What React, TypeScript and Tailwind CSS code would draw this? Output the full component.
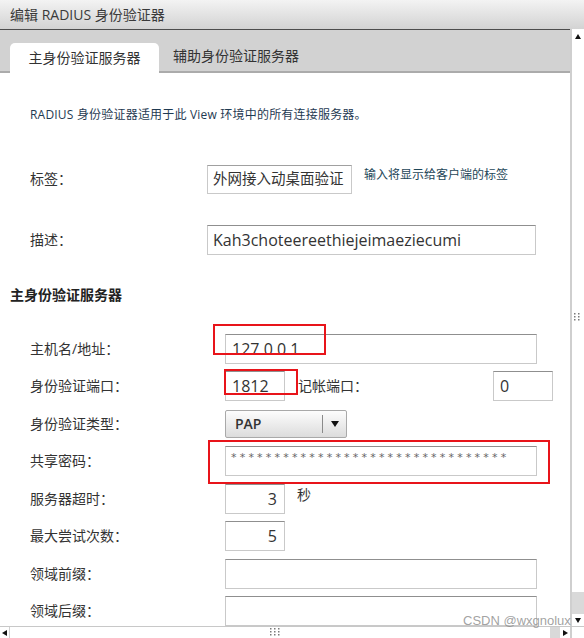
import React from "react";

function Box({
  className = "",
  children,
}: {
  className?: string;
  children?: React.ReactNode;
}) {
  return (
    <div
      className={
        "bg-white border border-[#c9c9c9] border-t-[#8f8f8f] flex items-center text-[#333] " +
        className
      }
    >
      {children}
    </div>
  );
}

function Grip({ cols, rows }: { cols: number; rows: number }) {
  const dots: React.ReactNode[] = [];
  for (let c = 0; c < cols; c++) {
    for (let r = 0; r < rows; r++) {
      dots.push(
        <rect key={c + "-" + r} x={c * 4} y={r * 3} width={1.5} height={1.5} fill="#7a7a7a" />
      );
    }
  }
  return (
    <svg width={cols * 4} height={rows * 3} viewBox={`0 0 ${cols * 4} ${rows * 3}`}>
      {dots}
    </svg>
  );
}

function Tri({ dir }: { dir: "up" | "down" | "left" | "right" }) {
  const pts =
    dir === "up"
      ? "0,5 6,5 3,0"
      : dir === "down"
      ? "0,0 6,0 3,5"
      : dir === "left"
      ? "5,0 5,6 0,3"
      : "0,0 0,6 5,3";
  const w = dir === "up" || dir === "down" ? 6 : 5;
  const h = dir === "up" || dir === "down" ? 5 : 6;
  return (
    <svg width={w} height={h} viewBox={`0 0 ${w} ${h}`}>
      <polygon points={pts} fill="#111" />
    </svg>
  );
}

function Row({ label, children }: { label: string; children?: React.ReactNode }) {
  return (
    <div className="flex items-center h-[30px]">
      <span className="w-[225px] pl-[30px] text-[14px] text-[#333] leading-[20px]">{label}</span>
      {children}
    </div>
  );
}

export default function App() {
  return (
    <div className="relative w-[584px] h-[638px] overflow-hidden bg-white font-['Open_Sans','Noto_Sans_CJK_SC',sans-serif] text-[#333]">
      {/* Title bar */}
      <div className="h-[29px] bg-gradient-to-b from-[#f3f3f3] to-[#d3d3d3] flex items-center pl-[10px] text-[14px] text-[#3a3a3a]">
        编辑 RADIUS 身份验证器
      </div>

      {/* Body */}
      <div className="flex h-[597px]">
        {/* main column */}
        <div className="w-[570px] flex flex-col border-t border-[#4d4d4d]">
          {/* tab bar */}
          <div className="h-[43px] bg-[#d2d2d2] border-b-2 border-[#ababab] flex items-end pl-[10px]">
            <div className="w-[149px] h-[30px] -mb-[2px] bg-white rounded-t-[5px] flex items-center justify-center text-[14px] text-[#333]">
              主身份验证服务器
            </div>
            <div className="ml-[14px] h-[30px] flex items-center text-[14px] text-[#333]">
              辅助身份验证服务器
            </div>
          </div>

          {/* content */}
          <div className="flex-1 bg-white pt-[34px]">
            <p className="pl-[30px] text-[12px] tracking-[0.2px] leading-[16px] text-[#1f3a52]">
              RADIUS 身份验证器适用于此 View 环境中的所有连接服务器。
            </p>

            <div className="mt-[42px] flex items-center h-[29px]">
              <span className="w-[207px] pl-[30px] text-[14px] leading-[20px]">标签：</span>
              <Box className="w-[145px] h-full pl-[5px] text-[14.5px] border-t-[#a0a0a0]">外网接入动桌面验证</Box>
              <span className="self-start mt-[2px] ml-[12px] text-[12px] leading-[16px] text-[#1d4658]">
                输入将显示给客户端的标签
              </span>
            </div>

            <div className="mt-[31px] flex items-center h-[30px]">
              <span className="w-[207px] pl-[30px] text-[14px] leading-[20px]">描述：</span>
              <Box className="w-[329px] h-full pl-[5px] text-[16px]">Kah3choteereethiejeimaeziecumi</Box>
            </div>

            <div className="mt-[30px] pl-[10px] text-[14px] leading-[20px] font-bold text-[#222]">
              主身份验证服务器
            </div>

            <div className="mt-[29px] flex flex-col gap-[7.5px]">
              <Row label="主机名/地址：">
                <Box className="w-[312px] h-full pl-[6px] text-[16px]">127.0.0.1</Box>
              </Row>
              <Row label="身份验证端口：">
                <Box className="w-[60px] h-full pl-[6px] text-[16px]">1812</Box>
                <span className="ml-[13px] w-[195px] text-[14px] leading-[20px]">记帐端口：</span>
                <Box className="w-[60px] h-full pl-[6px] text-[16px]">0</Box>
              </Row>
              <Row label="身份验证类型：">
                <div className="w-[122px] h-[28px] border border-[#a9a9a9] rounded-[2px] bg-gradient-to-b from-[#fdfdfd] to-[#dcdcdc] flex items-center">
                  <span className="pl-[9px] w-[96px] text-[14px] font-semibold text-[#333]">PAP</span>
                  <span className="w-px h-[18px] bg-[#8a8a8a]" />
                  <span className="flex-1 flex justify-center">
                    <svg width="8" height="6" viewBox="0 0 8 6">
                      <polygon points="0,0 8,0 4,6" fill="#111" />
                    </svg>
                  </span>
                </div>
              </Row>
              <Row label="共享密码：">
                <Box className="w-[312px] h-full pl-[5px]">
                  <span className="text-[11px] tracking-[3.2px] text-[#666] -mt-[6px] font-['DejaVu_Sans',sans-serif]">
                    ********************************
                  </span>
                </Box>
              </Row>
              <Row label="服务器超时：">
                <Box className="w-[60px] h-full justify-end pr-[7px] text-[16px]">3</Box>
                <span className="self-start ml-[12px] mt-[1px] text-[14px] leading-[20px]">秒</span>
              </Row>
              <Row label="最大尝试次数：">
                <Box className="w-[60px] h-full justify-end pr-[7px] text-[16px]">5</Box>
              </Row>
              <Row label="领域前缀：">
                <Box className="w-[312px] h-full" />
              </Row>
              <Row label="领域后缀：">
                <Box className="w-[312px] h-full" />
              </Row>
            </div>
          </div>
        </div>

        {/* vertical scrollbar */}
        <div className="w-[14px] border-l-2 border-[#cfcfcf] bg-white flex flex-col">
          <div className="h-[14px] flex items-center justify-center">
            <Tri dir="up" />
          </div>
          <div className="flex-1 flex items-center justify-center">
            <Grip cols={2} rows={3} />
          </div>
          <div className="h-[22px] bg-[#d9d9d9]" />
          <div className="h-[12px] flex items-center justify-center">
            <Tri dir="down" />
          </div>
        </div>
      </div>

      {/* horizontal scrollbar */}
      <div className="h-[12px] flex border-t border-[#c8c8c8] bg-white">
        <div className="w-[10px] flex items-center justify-center border-r border-[#d0d0d0]">
          <Tri dir="left" />
        </div>
        <div className="flex-1 flex items-center justify-center pr-[8px]">
          <Grip cols={3} rows={3} />
        </div>
        <div className="w-[10px] bg-[#d9d9d9]" />
        <div className="w-[10px] flex items-center justify-center">
          <Tri dir="right" />
        </div>
        <div className="w-[14px] border-l-2 border-[#cfcfcf]" />
      </div>

      {/* red annotation boxes */}
      <div className="absolute left-[213px] top-[324px] w-[113px] h-[31px] border-2 border-[#e8141a]" />
      <div className="absolute left-[224px] top-[369px] w-[74px] h-[26px] border-2 border-[#e8141a]" />
      <div className="absolute left-[208px] top-[440px] w-[342px] h-[44px] border-2 border-[#e8141a]" />

      {/* watermark */}
      <div className="absolute left-[463px] top-[611px] whitespace-nowrap text-[13px] leading-[20px] text-[#8a8a8a]/80 font-['Liberation_Sans',sans-serif]">
        CSDN @wxgnolux
      </div>
    </div>
  );
}
